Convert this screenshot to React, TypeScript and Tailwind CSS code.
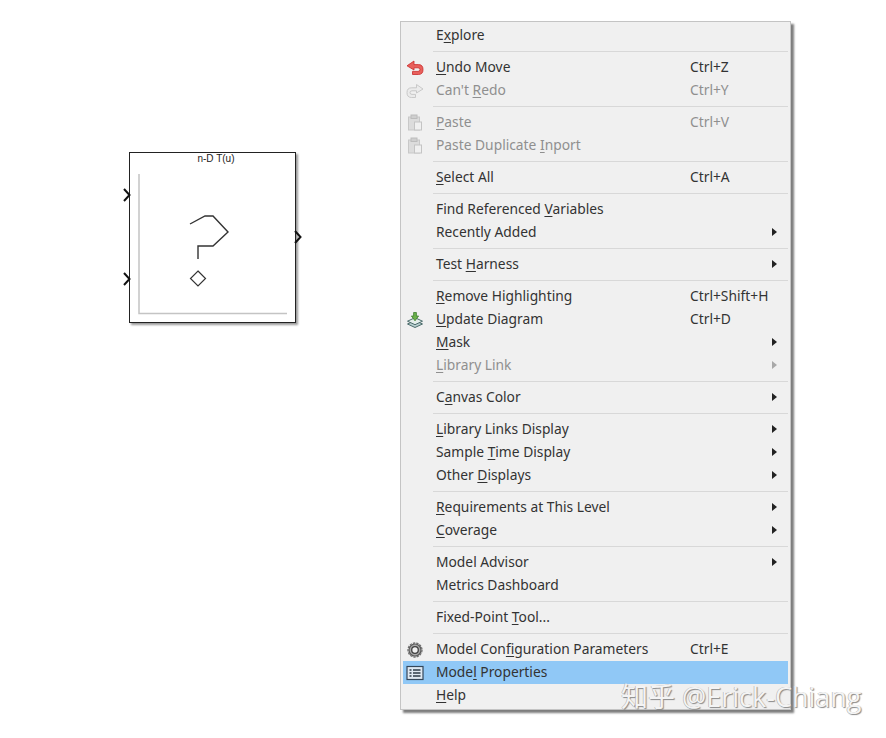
import React from "react";

type Item = {
  pre?: string;
  u?: string;
  post?: string;
  key2?: string;
  sub?: boolean;
  off?: boolean;
  icon?: React.ReactNode;
  active?: boolean;
};

const Undo = () => (
  <svg width="18" height="16" viewBox="0 0 18 16" fill="none">
    <path d="M8 1 L1 5.8 L8 10 L8 7.8 L12 7.8 Q14 7.8 14 9.6 Q14 11.4 12 11.4 L6.5 11.4 L6.5 14.5 L12.5 14.5 Q17 14.5 17 9.6 Q17 4.6 12.5 4.6 L8 4.6 Z" fill="#e8605c" stroke="#c92a2a" strokeWidth="0.8" />
  </svg>
);
const Redo = () => (
  <svg width="18" height="16" viewBox="0 0 18 16" fill="none">
    <path d="M10.5 1.5 L17 6 L10.5 10 L10.5 7.8 L6 7.8 Q4 7.8 4 9.6 Q4 11.4 6 11.4 L9.5 11.4 L9.5 14.5 L5.5 14.5 Q1 14.5 1 9.6 Q1 4.8 5.5 4.8 L10.5 4.8 Z" fill="#ebebeb" stroke="#c4c4c4" strokeWidth="0.9" />
  </svg>
);
const PasteIcon = () => (
  <svg width="16" height="17" viewBox="0 0 16 17" fill="none">
    <rect x="1.5" y="3" width="11" height="13" fill="#dcdcdc" stroke="#c8c8c8" />
    <rect x="4" y="1" width="6" height="3.5" fill="#cfcfcf" stroke="#bcbcbc" />
    <rect x="7.5" y="8" width="7" height="8" fill="#f0f0f0" stroke="#c4c4c4" />
  </svg>
);
const UpdateIcon = () => (
  <svg width="18" height="18" viewBox="0 0 18 18" fill="none">
    <path d="M1.5 13 L9 9.5 L16.5 13 L9 16.5 Z" fill="#b8cfcf" stroke="#4b6b6b" strokeWidth="1" />
    <path d="M1.5 10.2 L9 6.7 L16.5 10.2 L9 13.7 Z" fill="#e4eeea" stroke="#4b6b6b" strokeWidth="1" />
    <path d="M7.6 1.5 H10.4 V5 H12.6 L9 9.8 L5.4 5 H7.6 Z" fill="#6bb04a" stroke="#3d7f2e" strokeWidth="0.8" />
  </svg>
);
const GearIcon = () => (
  <svg width="18" height="18" viewBox="0 0 18 18" fill="none">
    <circle cx="9" cy="9" r="6" fill="#a8a8a8" stroke="#5a5a5a" strokeWidth="1.2" />
    <circle cx="9" cy="9" r="7" fill="none" stroke="#6e6e6e" strokeWidth="1.3" strokeDasharray="2.4 1" />
    <circle cx="9" cy="9" r="3.3" fill="#efefef" stroke="#3f3f3f" strokeWidth="1.3" />
  </svg>
);
const ListIcon = () => (
  <svg width="18" height="16" viewBox="0 0 18 16" fill="none">
    <rect x="1" y="1.5" width="16" height="13" fill="#dfe9f2" stroke="#34475a" strokeWidth="1.2" />
    <path d="M3.5 5 H5.5 M7 5 H14.5 M3.5 8 H5.5 M7 8 H14.5 M3.5 11 H5.5 M7 11 H14.5" stroke="#2f3c49" strokeWidth="1.3" />
  </svg>
);

const groups: Item[][] = [
  [{ pre: "E", u: "x", post: "plore" }],
  [
    { u: "U", post: "ndo Move", key2: "Ctrl+Z", icon: <Undo /> },
    { pre: "Can't ", u: "R", post: "edo", key2: "Ctrl+Y", off: true, icon: <Redo /> },
  ],
  [
    { u: "P", post: "aste", key2: "Ctrl+V", off: true, icon: <PasteIcon /> },
    { pre: "Paste Duplicate ", u: "I", post: "nport", off: true, icon: <PasteIcon /> },
  ],
  [{ u: "S", post: "elect All", key2: "Ctrl+A" }],
  [
    { pre: "Find Referenced ", u: "V", post: "ariables" },
    { pre: "Recently Added", sub: true },
  ],
  [{ pre: "Test ", u: "H", post: "arness", sub: true }],
  [
    { u: "R", post: "emove Highlighting", key2: "Ctrl+Shift+H" },
    { u: "U", post: "pdate Diagram", key2: "Ctrl+D", icon: <UpdateIcon /> },
    { u: "M", post: "ask", sub: true },
    { u: "L", post: "ibrary Link", sub: true, off: true },
  ],
  [{ pre: "C", u: "a", post: "nvas Color", sub: true }],
  [
    { u: "L", post: "ibrary Links Display", sub: true },
    { pre: "Sample ", u: "T", post: "ime Display", sub: true },
    { pre: "Other ", u: "D", post: "isplays", sub: true },
  ],
  [
    { u: "R", post: "equirements at This Level", sub: true },
    { u: "C", post: "overage", sub: true },
  ],
  [
    { pre: "Model Advisor", sub: true },
    { pre: "Metrics Dashboard" },
  ],
  [{ pre: "Fixed-Point ", u: "T", post: "ool..." }],
  [
    { pre: "Model Con", u: "f", post: "iguration Parameters", key2: "Ctrl+E", icon: <GearIcon /> },
    { pre: "Mode", u: "l", post: " Properties", active: true, icon: <ListIcon /> },
    { u: "H", post: "elp" },
  ],
];

function Row({ item }: { item: Item }) {
  const color = item.off ? "text-[#8f8f8f]" : "text-[#333333]";
  return (
    <div className={`flex h-[23px] items-center ${item.active ? "bg-[#90c8f6]" : ""} ${color}`}>
      <div className="flex w-[24px] shrink-0 items-center justify-center">{item.icon}</div>
      <div className="mb-[1px] ml-[9px] w-[254px] shrink-0 whitespace-nowrap">
        {item.pre}
        {item.u && <u className="underline-offset-2">{item.u}</u>}
        {item.post}
      </div>
      <div className="mb-[1px] w-[82px] shrink-0 whitespace-nowrap">{item.key2}</div>
      {item.sub && (
        <svg width="5" height="8" viewBox="0 0 5 8" className="mb-[2px] shrink-0">
          <path d="M0 0 L5 4 L0 8 Z" fill={item.off ? "#a8a8a8" : "#222222"} />
        </svg>
      )}
    </div>
  );
}

function Menu() {
  return (
    <div className="flex h-[689px] w-[391px] flex-col border border-[#c4c4c4] bg-[#f0f0f0] pl-[2px] pr-[2px] pt-[2px] font-['Noto_Sans',sans-serif] text-[13.8px] shadow-[3px_3px_2px_#7d7d7d]">
      {groups.map((g, i) => (
        <div key={i}>
          {i > 0 && (
            <div className="flex h-[9px] items-center pl-[30px]">
              <div className="h-px w-full bg-[#d8d8d8]" />
            </div>
          )}
          {g.map((it, j) => (
            <Row key={j} item={it} />
          ))}
        </div>
      ))}
    </div>
  );
}

const Port = ({ className }: { className: string }) => (
  <svg width="8" height="14" viewBox="0 0 8 14" className={className} fill="none">
    <path d="M1 1 L6.5 7 L1 13" stroke="#111111" strokeWidth="2" />
  </svg>
);

function Block() {
  return (
    <div className="relative h-[171px] w-[167px] border border-[#222222] bg-white shadow-[2px_2px_2px_#9a9a9a]">
      <div className="pl-[7px] text-center font-['Liberation_Sans',sans-serif] text-[10px] leading-[12px] text-[#222222]">n-D T(u)</div>
      <Port className="absolute left-[-7px] top-[35px]" />
      <Port className="absolute left-[-7px] top-[119px]" />
      <Port className="absolute right-[-7px] top-[77px]" />
      <svg width="165" height="169" viewBox="0 0 165 169" className="absolute left-0 top-0" fill="none">
        <path d="M9 21 V160.5 H157" stroke="#c4c4c4" strokeWidth="1.5" />
        <path d="M60 71 L75 63 H83 L98 79 L83 93 H68 V106" stroke="#333333" strokeWidth="1.4" />
        <path d="M68 118 L75.5 125.5 L68 133 L60.5 125.5 Z" stroke="#333333" strokeWidth="1.2" />
      </svg>
    </div>
  );
}

export default function App() {
  return (
    <div className="relative flex h-[738px] w-[886px] items-start overflow-hidden bg-white">
      <div className="ml-[129px] mt-[152px]">
        <Block />
      </div>
      <div className="ml-[104px] mt-[21px]">
        <Menu />
      </div>
      <div className="absolute left-[621px] top-[678px] whitespace-nowrap font-['Open_Sans','Noto_Sans_CJK_SC',sans-serif] text-[27px] leading-[36px] text-[#f4f4f4] [text-shadow:1px_1px_1px_#8a8a8a,-0.5px_-0.5px_0.5px_#a8a8a8]">
        <span className="font-['Noto_Sans_CJK_SC',sans-serif]">知乎</span> @Erick-Chiang
      </div>
    </div>
  );
}
